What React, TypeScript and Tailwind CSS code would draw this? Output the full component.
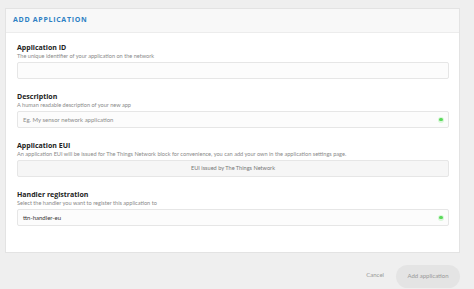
import React from 'react'

type FieldProps = {
  label: string
  help: string
  children: React.ReactNode
}

const Field = ({ label, help, children }: FieldProps) => (
  <div>
    <div className="text-[7px] font-bold leading-[9px] text-[#222]" style={{ fontFamily: '"Open Sans", sans-serif' }}>
      {label}
    </div>
    <div className="text-[5.6px] leading-[7px] text-[#8a8a8a]">{help}</div>
    <div className="mt-[3px]">{children}</div>
  </div>
)

const OkDot = () => (
  <span className="flex h-[6px] w-[6px] items-center justify-center rounded-full bg-[#d8f7d8]">
    <span className="h-[3.5px] w-[3.5px] rounded-full bg-[#5ad95a]" />
  </span>
)

export default function App() {
  return (
    <div className="h-[289px] w-[474px] overflow-hidden bg-[#efefef]" style={{ fontFamily: 'Lato, sans-serif' }}>
      <div className="ml-[5px] mt-[8px] w-[455px] border border-[#e3e3e3] bg-white">
        <div className="flex h-[24px] items-center border-b border-[#ececec] bg-[#f8f8f8] px-[7px]">
          <h1
            className="text-[7px] font-bold tracking-[0.1em] text-[#2d80c4]"
            style={{ fontFamily: '"Open Sans", sans-serif' }}
          >
            ADD APPLICATION
          </h1>
        </div>

        <div className="flex flex-col gap-[13px] pb-[26px] pl-[11px] pr-[10px] pt-[10px]">
          <Field label="Application ID" help="The unique identifier of your application on the network">
            <div className="h-[17px] rounded-[2px] border border-[#e6e6e6] bg-[#fcfcfc]" />
          </Field>

          <Field label="Description" help="A human readable description of your new app">
            <div className="flex h-[17px] items-center justify-between rounded-[2px] border border-[#e6e6e6] bg-[#fcfcfc] pl-[5px] pr-[4px]">
              <span className="text-[6px] text-[#8c8c8c]">Eg. My sensor network application</span>
              <OkDot />
            </div>
          </Field>

          <Field
            label="Application EUI"
            help="An application EUI will be issued for The Things Network block for convenience, you can add your own in the application settings page."
          >
            <div className="flex h-[17px] items-center justify-center rounded-[2px] border border-[#e6e6e6] bg-[#f6f6f6]">
              <span className="text-[5.6px] text-[#777]">EUI issued by The Things Network</span>
            </div>
          </Field>

          <Field label="Handler registration" help="Select the handler you want to register this application to">
            <div className="flex h-[17px] items-center justify-between rounded-[2px] border border-[#e6e6e6] bg-[#fcfcfc] pl-[5px] pr-[4px]">
              <span className="text-[6px] text-[#333]">ttn-handler-eu</span>
              <OkDot />
            </div>
          </Field>
        </div>
      </div>

      <div className="mt-[12px] flex w-[460px] items-start justify-end gap-[12px]">
        <button className="pt-[5px] text-[6px] text-[#999]">Cancel</button>
        <button className="h-[23px] w-[64px] rounded-full bg-[#e4e4e4] pb-[3px] text-[6px] text-[#999]">Add application</button>
      </div>
    </div>
  )
}
